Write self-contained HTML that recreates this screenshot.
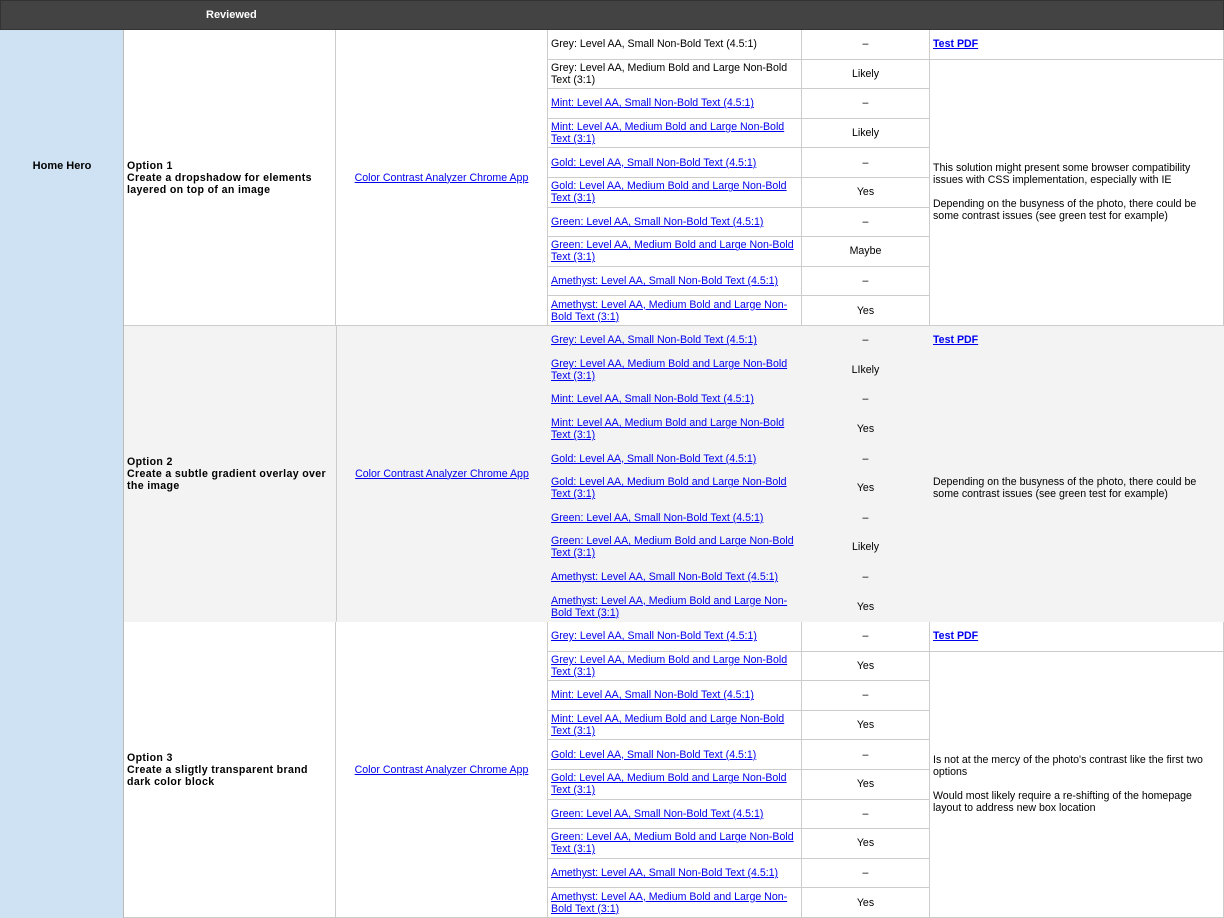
<!DOCTYPE html>
<html><head><meta charset="utf-8"><style>
*{box-sizing:border-box;margin:0;padding:0}
body{width:1224px;height:918px;overflow:hidden;background:#fff;font-family:"Liberation Sans",Arial,sans-serif;font-size:10.6px;color:#000;position:relative}
.hdr{position:absolute;left:0;top:0;width:1224px;height:30px;background:#434343;border:1px solid #333}
.hdr span{position:absolute;left:205px;top:8px;color:#fff;font-weight:bold;font-size:11px}
.c1{position:absolute;left:0;top:30px;width:124px;height:888px;background:#cfe2f3;border-right:1px solid #bbb}
.c1 b{position:absolute;left:0;width:124px;text-align:center;top:130px;font-size:11px}
.sec{position:absolute;left:124px;width:1100px;height:296px;display:grid;grid-template-columns:212px 212px 254px 128px 294px;grid-template-rows:repeat(10,1fr)}
.sec div{display:flex;align-items:center;border-right:1px solid #ccc;border-bottom:1px solid #ccc;padding:0 3px;line-height:12px;overflow:hidden}
.g{background:#f3f3f3}
.g div{border-color:transparent}
.g .l3{border-left:1px solid #ccc}
.sec .a{grid-column:1;grid-row:1/11;font-weight:bold;letter-spacing:0.35px;padding-right:6px}
.b{grid-column:2;grid-row:1/11;justify-content:center}
.v{justify-content:center}
.n{grid-column:5;grid-row:2/11}
a{color:#0000ee;text-decoration:underline}
.tp{font-weight:bold}
</style></head><body>
<div class="hdr"><span>Reviewed</span></div>
<div class="c1"><b>Home Hero</b></div>

<div class="sec" style="top:30px">
<div class="a">Option 1<br>Create a dropshadow for elements layered on top of an image</div>
<div class="b"><a>Color Contrast Analyzer Chrome App</a></div>
<div>Grey: Level AA, Small Non-Bold Text (4.5:1)</div><div class="v">–</div><div><a class="tp">Test PDF</a></div>
<div>Grey: Level AA, Medium Bold and Large Non-Bold Text (3:1)</div><div class="v">Likely</div>
<div class="n">This solution might present some browser compatibility issues with CSS implementation, especially with IE<br><br>Depending on the busyness of the photo, there could be some contrast issues (see green test for example)</div>
<div><a>Mint: Level AA, Small Non-Bold Text (4.5:1)</a></div><div class="v">–</div>
<div><a>Mint: Level AA, Medium Bold and Large Non-Bold Text (3:1)</a></div><div class="v">Likely</div>
<div><a>Gold: Level AA, Small Non-Bold Text (4.5:1)</a></div><div class="v">–</div>
<div><a>Gold: Level AA, Medium Bold and Large Non-Bold Text (3:1)</a></div><div class="v">Yes</div>
<div><a>Green: Level AA, Small Non-Bold Text (4.5:1)</a></div><div class="v">–</div>
<div><a>Green: Level AA, Medium Bold and Large Non-Bold Text (3:1)</a></div><div class="v">Maybe</div>
<div><a>Amethyst: Level AA, Small Non-Bold Text (4.5:1)</a></div><div class="v">–</div>
<div><a>Amethyst: Level AA, Medium Bold and Large Non-Bold Text (3:1)</a></div><div class="v">Yes</div>
</div>

<div class="sec g" style="top:326px">
<div class="a">Option 2<br>Create a subtle gradient overlay over the image</div>
<div class="b l3"><a>Color Contrast Analyzer Chrome App</a></div>
<div><a>Grey: Level AA, Small Non-Bold Text (4.5:1)</a></div><div class="v">–</div><div><a class="tp">Test PDF</a></div>
<div><a>Grey: Level AA, Medium Bold and Large Non-Bold Text (3:1)</a></div><div class="v">LIkely</div>
<div class="n">Depending on the busyness of the photo, there could be some contrast issues (see green test for example)</div>
<div><a>Mint: Level AA, Small Non-Bold Text (4.5:1)</a></div><div class="v">–</div>
<div><a>Mint: Level AA, Medium Bold and Large Non-Bold Text (3:1)</a></div><div class="v">Yes</div>
<div><a>Gold: Level AA, Small Non-Bold Text (4.5:1)</a></div><div class="v">–</div>
<div><a>Gold: Level AA, Medium Bold and Large Non-Bold Text (3:1)</a></div><div class="v">Yes</div>
<div><a>Green: Level AA, Small Non-Bold Text (4.5:1)</a></div><div class="v">–</div>
<div><a>Green: Level AA, Medium Bold and Large Non-Bold Text (3:1)</a></div><div class="v">Likely</div>
<div><a>Amethyst: Level AA, Small Non-Bold Text (4.5:1)</a></div><div class="v">–</div>
<div><a>Amethyst: Level AA, Medium Bold and Large Non-Bold Text (3:1)</a></div><div class="v">Yes</div>
</div>

<div class="sec" style="top:622px">
<div class="a">Option 3<br>Create a sligtly transparent brand dark color block</div>
<div class="b"><a>Color Contrast Analyzer Chrome App</a></div>
<div><a>Grey: Level AA, Small Non-Bold Text (4.5:1)</a></div><div class="v">–</div><div><a class="tp">Test PDF</a></div>
<div><a>Grey: Level AA, Medium Bold and Large Non-Bold Text (3:1)</a></div><div class="v">Yes</div>
<div class="n">Is not at the mercy of the photo's contrast like the first two options<br><br>Would most likely require a re-shifting of the homepage layout to address new box location</div>
<div><a>Mint: Level AA, Small Non-Bold Text (4.5:1)</a></div><div class="v">–</div>
<div><a>Mint: Level AA, Medium Bold and Large Non-Bold Text (3:1)</a></div><div class="v">Yes</div>
<div><a>Gold: Level AA, Small Non-Bold Text (4.5:1)</a></div><div class="v">–</div>
<div><a>Gold: Level AA, Medium Bold and Large Non-Bold Text (3:1)</a></div><div class="v">Yes</div>
<div><a>Green: Level AA, Small Non-Bold Text (4.5:1)</a></div><div class="v">–</div>
<div><a>Green: Level AA, Medium Bold and Large Non-Bold Text (3:1)</a></div><div class="v">Yes</div>
<div><a>Amethyst: Level AA, Small Non-Bold Text (4.5:1)</a></div><div class="v">–</div>
<div><a>Amethyst: Level AA, Medium Bold and Large Non-Bold Text (3:1)</a></div><div class="v">Yes</div>
</div>
</body></html>
